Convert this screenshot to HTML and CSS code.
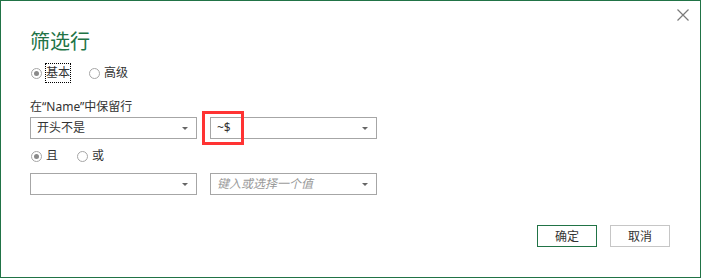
FILE: index.html
```html
<!DOCTYPE html>
<html>
    <head>
        <meta charset="utf-8" />
        <title>筛选行</title>
        <link rel="stylesheet" href="styles.css">
    </head>
    <body>
        <div class="dialog">
            <span class="close" title="关闭">
                <svg width="12" height="12" viewBox="0 0 12 12"><path d="M0.5 0.5 L11.5 11.5 M11.5 0.5 L0.5 11.5" stroke="#7a7a7a" stroke-width="1.2" fill="none"/></svg>
            </span>
            <h1 class="title">筛选行</h1>
            <div class="radios mode">
                <label class="radio checked"><span class="dot"></span><span class="focus">基本</span></label>
                <label class="radio"><span class="dot"></span>高级</label>
            </div>
            <p class="hint">在“Name”中保留行</p>
            <div class="row">
                <div class="select"><span class="value">开头不是</span><span class="arrow"></span></div>
                <div class="select mark"><span class="value">~$</span><span class="arrow"></span></div>
            </div>
            <div class="radios join">
                <label class="radio checked"><span class="dot"></span>且</label>
                <label class="radio"><span class="dot"></span>或</label>
            </div>
            <div class="row">
                <div class="select"><span class="value"></span><span class="arrow"></span></div>
                <div class="select combo"><span class="value placeholder">键入或选择一个值</span><span class="arrow"></span></div>
            </div>
            <div class="buttons">
                <button class="btn primary">确定</button>
                <button class="btn">取消</button>
            </div>
        </div>
    </body>
</html>
```
FILE: styles.css
```css
body {
    margin: 0;
    font-family: "Segoe UI", "Noto Sans", "Noto Sans CJK SC", sans-serif;
    font-size: 12px;
    color: #333;
}

.dialog {
    position: relative;
    width: 701px;
    height: 278px;
    box-sizing: border-box;
    border: 1px solid #217346;
    background: #fff;
    padding: 28px 30px 0 29px;
}

.close {
    position: absolute;
    top: 8px;
    right: 11px;
    width: 12px;
    height: 12px;
    line-height: 0;
}

.title {
    margin: 0;
    font-size: 20px;
    font-weight: normal;
    line-height: 26px;
    color: #217346;
}

.radios {
    display: flex;
    height: 20px;
    align-items: center;
}

.mode {
    margin-top: 8px;
}

.join {
    margin-top: 7px;
}

.radio {
    display: flex;
    align-items: center;
    margin-right: 18px;
    line-height: 18px;
}

.dot {
    width: 9px;
    height: 9px;
    border: 1px solid #a6a6a6;
    border-radius: 50%;
    margin: 0 4px 0 1px;
    box-sizing: content-box;
    position: relative;
}

.checked .dot:after {
    content: "";
    position: absolute;
    left: 2px;
    top: 2px;
    width: 5px;
    height: 5px;
    border-radius: 50%;
    background: #8a8a8a;
}

.focus {
    outline: 1px dotted #000;
    outline-offset: 0;
}

.hint {
    margin: 14px 0 0;
    line-height: 20px;
}

.row {
    display: flex;
    gap: 13px;
}

.join + .row {
    margin-top: 7px;
}

.select {
    position: relative;
    display: flex;
    align-items: center;
    width: 167px;
    height: 22px;
    box-sizing: border-box;
    border: 1px solid #a6a6a6;
    padding: 0 6px;
}

.value {
    flex: 1;
    line-height: 18px;
}

.arrow {
    width: 0;
    height: 0;
    border-left: 3px solid transparent;
    border-right: 3px solid transparent;
    border-top: 3px solid #666;
    margin-right: 2px;
}

.mark:before {
    content: "";
    position: absolute;
    left: -9px;
    top: -7px;
    width: 42px;
    height: 34px;
    box-sizing: border-box;
    border: 3px solid #ff3333;
}

.placeholder {
    font-style: italic;
    color: #9a9a9a;
}

.buttons {
    display: flex;
    justify-content: flex-end;
    gap: 13px;
    margin-top: 30px;
}

.btn {
    width: 60px;
    height: 22px;
    box-sizing: border-box;
    border: 1px solid #c6c6c6;
    background: #fff;
    font: inherit;
    color: #333;
    padding: 0;
}

.btn.primary {
    border-color: #217346;
}
```
